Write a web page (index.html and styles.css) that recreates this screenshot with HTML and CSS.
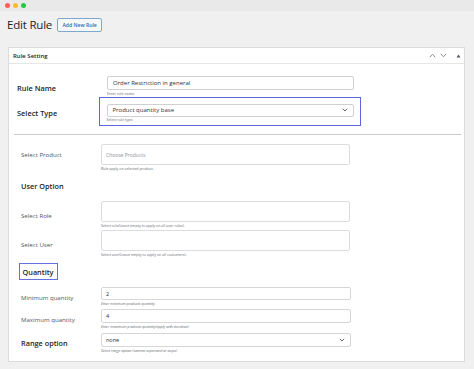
FILE: index.html
```html
<!DOCTYPE html>
<html>
<head>
<meta charset="utf-8">
<link rel="stylesheet" href="styles.css">
</head>
<body>
<div class="topbar">
  <span class="dot red"></span><span class="dot yellow"></span><span class="dot green"></span>
</div>
<div class="titlebar">
  <h1 class="title">Edit Rule</h1>
  <span class="btn">Add New Rule</span>
</div>
<div class="panel">
  <div class="panel-head">
    <span class="head-title">Rule Setting</span>
    <span class="ctrls">
      <svg width="7" height="5" viewBox="0 0 7 5"><path d="M0.8 4.2 L3.5 1.2 L6.2 4.2" fill="none" stroke="#8c8f94" stroke-width="1"/></svg>
      <svg width="7" height="5" viewBox="0 0 7 5"><path d="M0.8 0.8 L3.5 3.8 L6.2 0.8" fill="none" stroke="#8c8f94" stroke-width="1"/></svg>
      <svg class="tri" width="5" height="4" viewBox="0 0 5 4"><path d="M0.5 3.5 L2.5 0.5 L4.5 3.5 Z" fill="#50575e"/></svg>
    </span>
  </div>
  <div class="sec1">
    <div class="row row-name">
      <div class="lbl strong">Rule Name</div>
      <div class="field pad">
        <div class="input">Order Restriction in general</div>
        <div class="help">Enter rule name.</div>
      </div>
    </div>
    <div class="row row-type">
      <div class="lbl strong">Select Type</div>
      <div class="field hl">
        <div class="input select">Product quantity base
          <svg class="chev" width="6" height="4" viewBox="0 0 6 4"><path d="M0.8 0.8 L3 3 L5.2 0.8" fill="none" stroke="#50575e" stroke-width="0.9"/></svg>
        </div>
        <div class="help">Select rule type.</div>
      </div>
    </div>
  </div>
  <div class="sep"></div>
  <div class="sec2">
    <div class="row row-tall">
      <div class="lbl">Select Product</div>
      <div class="field">
        <div class="input tall placeholder">Choose Products</div>
        <div class="help">Rule apply on selected product.</div>
      </div>
    </div>
    <div class="heading">User Option</div>
    <div class="row row-tall lower">
      <div class="lbl">Select Role</div>
      <div class="field">
        <div class="input tall"></div>
        <div class="help">Select role(Leave empty to apply on all user roles).</div>
      </div>
    </div>
    <div class="row row-tall lower">
      <div class="lbl">Select User</div>
      <div class="field">
        <div class="input tall"></div>
        <div class="help">Select user(Leave empty to apply on all customers).</div>
      </div>
    </div>
    <div class="boxed"><span>Quantity</span></div>
    <div class="row row-min">
      <div class="lbl">Minimum quantity</div>
      <div class="field">
        <div class="input small">2</div>
        <div class="help it">Enter minimum products quantity.</div>
      </div>
    </div>
    <div class="row row-max">
      <div class="lbl">Maximum quantity</div>
      <div class="field">
        <div class="input small">4</div>
        <div class="help it">Enter maximum products quantity(apply with duration).</div>
      </div>
    </div>
    <div class="row row-range">
      <div class="lbl strong">Range option</div>
      <div class="field">
        <div class="input small select">none
          <svg class="chev" width="6" height="4" viewBox="0 0 6 4"><path d="M0.8 0.8 L3 3 L5.2 0.8" fill="none" stroke="#50575e" stroke-width="0.9"/></svg>
        </div>
        <div class="help it">Select range option (comma separated or steps).</div>
      </div>
    </div>
  </div>
</div>
</body>
</html>
```

FILE: styles.css
```css
* { box-sizing: border-box; }
html, body { margin: 0; padding: 0; }
body {
  width: 474px;
  height: 369px;
  overflow: hidden;
  background: #f0f0f1;
  font-family: "Open Sans", "Noto Sans", sans-serif;
  color: #1d2327;
}
.topbar {
  height: 11px;
  background: #e9e9ea;
  display: flex;
  align-items: center;
  gap: 3px;
  padding-left: 5px;
}
.dot { width: 5px; height: 5px; border-radius: 50%; display: block; }
.red { background: #fe5f57; }
.yellow { background: #febc2e; }
.green { background: #28c840; }
.titlebar {
  height: 27px;
  display: flex;
  align-items: center;
  padding-left: 7px;
  gap: 5px;
}
.title {
  margin: 0;
  font-weight: 400;
  font-size: 11.5px;
  letter-spacing: -0.2px;
  line-height: 14px;
  color: #1d2327;
}
.btn {
  height: 14px;
  width: 45px;
  display: flex;
  align-items: center;
  justify-content: center;
  border: 1px solid #7ea7cf;
  border-radius: 2px;
  background: #f6f7f7;
  color: #2271b1;
  font-size: 5.1px;
  font-weight: 600;
  white-space: nowrap;
}
.panel {
  margin: 9px 9px 0 8px;
  height: 315px;
  background: #fff;
  border: 1px solid #dcdcde;
}
.panel-head {
  height: 16px;
  border-bottom: 1px solid #e6e6e7;
  display: flex;
  align-items: center;
  justify-content: space-between;
  padding: 0 3px 0 4px;
}
.head-title { font-size: 6px; font-weight: 600; color: #1d2327; }
.ctrls { display: flex; align-items: center; gap: 4px; }
.ctrls .tri { margin-left: 5px; }
.sec1 { padding: 12px 0 0 8px; }
.row { display: flex; align-items: flex-start; }
.lbl {
  font-size: 6.1px;
  line-height: 8px;
  color: #50575e;
  white-space: nowrap;
}
.lbl.strong { font-weight: 600; font-size: 7.3px; line-height: 10px; color: #1d2327; }
.sec1 .lbl { width: 82px; }
.sec1 .lbl.strong { font-size: 7.4px; }
.field { display: flex; flex-direction: column; }
.field.pad { padding-left: 8px; }
.row-name { height: 21px; }
.row-name .lbl { margin-top: 7px; }
.row-type .lbl { margin-top: 11px; }
.hl {
  width: 262px;
  height: 29px;
  border: 1.5px solid #5a66dc;
  padding: 5.5px 5.5px 0 6.5px;
}
.input {
  width: 247px;
  height: 14px;
  border: 1px solid #d0d0d2;
  border-radius: 2px;
  background: #fff;
  font-size: 6px;
  color: #2c3338;
  display: flex;
  align-items: center;
  padding-left: 5px;
}
.select { justify-content: space-between; padding-right: 5px; }
.row-type .input { height: 13px; }
.help {
  font-size: 3.6px;
  color: #646970;
  margin-top: 1.5px;
  line-height: 4px;
  white-space: nowrap;
}
.help.it { font-style: italic; }
.sep {
  height: 1px;
  background: #c9cacc;
  margin: 8px 3px 0 5px;
}
.sec2 { padding: 9px 0 0 12px; }
.sec2 .lbl { width: 80px; }
.input.tall { width: 249px; height: 21px; border-color: #dcdcde; padding-left: 4px; }
.placeholder { color: #8c8f94; font-size: 5px; }
.row-tall { height: 29px; }
.row-tall .lbl { margin-top: 7px; }
.row-tall.lower .lbl { margin-top: 10.5px; }
.heading {
  font-size: 7.3px;
  font-weight: 600;
  line-height: 10px;
  color: #1d2327;
  height: 28px;
  padding-top: 8px;
}
.boxed {
  margin: 4px 0 7px -2px;
  height: 17px;
  font-size: 7.3px;
  font-weight: 600;
  color: #1d2327;
}
.boxed span {
  display: flex;
  align-items: center;
  height: 17px;
  width: 39px;
  padding-left: 2.5px;
  border: 1.5px solid #6471e4;
}
.input.small { width: 250px; height: 14px; font-size: 5.5px; padding-left: 4px; border-color: #d6d6d8; }
.row-min { height: 22px; }
.row-min .input { height: 13px; }
.row-max { height: 24px; }
.row-min .lbl, .row-max .lbl { margin-top: 7px; }
.row-range .lbl { margin-top: 5px; }
.chev { display: block; }
```
